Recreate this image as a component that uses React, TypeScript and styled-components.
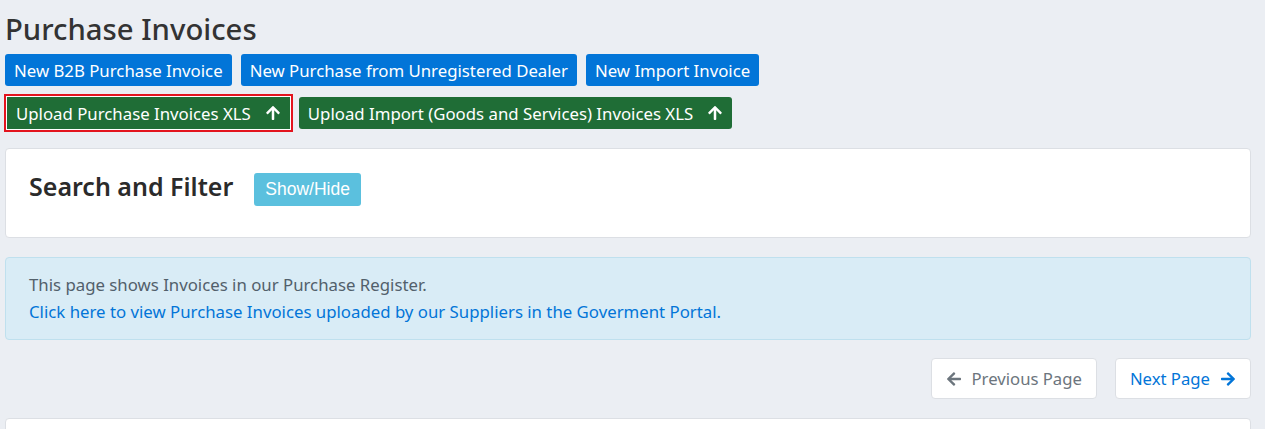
import React from "react";
import styled, { createGlobalStyle } from "styled-components";
import { FaArrowUp, FaArrowLeft, FaArrowRight } from "react-icons/fa";

const GlobalStyle = createGlobalStyle`
  html, body {
    margin: 0;
    padding: 0;
    background: #ebeef3;
    font-family: "Noto Sans", "Open Sans", sans-serif;
    color: #2b2b2b;
  }
  * {
    box-sizing: border-box;
  }
`;

const Page = styled.div`
  padding: 0 14px 0 5px;
`;

const Title = styled.h3`
  margin: 0;
  padding-top: 9px;
  font-size: 29.3px;
  font-weight: 500;
  line-height: 41px;
  color: #333;
`;

const ButtonRow = styled.div<{ $top: number }>`
  display: flex;
  align-items: flex-start;
  gap: 9px;
  margin-top: ${(p) => p.$top}px;
`;

const Button = styled.button<{ $variant: "primary" | "success"; $focused?: boolean }>`
  display: inline-flex;
  align-items: center;
  gap: 14px;
  height: 32px;
  padding: 0 9px;
  border: none;
  border-radius: 3px;
  font-family: inherit;
  font-size: 16.8px;
  color: #fff;
  cursor: pointer;
  background: ${(p) => (p.$variant === "primary" ? "#0275d8" : "#1f6d36")};
  ${(p) =>
    p.$focused &&
    `box-shadow: 0 0 0 1px #fff, 0 0 0 3px #e3141e; border-radius: 0; margin-left: 2px;`}

  svg {
    width: 16px;
    height: 16px;
  }
`;

const Card = styled.div`
  background: #fff;
  border: 1px solid #dcdfe4;
  border-radius: 4px;
`;

const FilterCard = styled(Card)`
  margin-top: 19px;
  padding: 23px 23px 31px;
  display: flex;
  align-items: center;
  gap: 21px;
`;

const CardTitle = styled.h4`
  margin: 0;
  font-size: 25px;
  font-weight: 600;
  color: #2b2b2b;
  position: relative;
  top: -3px;
`;

const InfoButton = styled.button`
  height: 33px;
  padding: 0 11px;
  border: none;
  border-radius: 3px;
  background: #5bc0de;
  color: #fff;
  font-family: "Liberation Sans", Arial, sans-serif;
  font-size: 17.5px;
  cursor: pointer;
`;

const Alert = styled.div`
  margin-top: 19px;
  padding: 13px 23px 14px 23px;
  background: #d9ecf6;
  border: 1px solid #bfe0ee;
  border-radius: 4px;
  font-size: 16.8px;
  line-height: 27px;
  color: #52606b;
`;

const Link = styled.a`
  color: #0275d8;
  text-decoration: none;
  display: block;
`;

const Pager = styled.div`
  display: flex;
  justify-content: flex-end;
  gap: 18px;
  margin-top: 18px;
`;

const PageButton = styled.button<{ $active?: boolean }>`
  display: inline-flex;
  align-items: center;
  gap: 10px;
  height: 41px;
  padding: 0 14px;
  background: #fff;
  border: 1px solid #dcdfe4;
  border-radius: 4px;
  font-family: inherit;
  font-size: 16.7px;
  color: ${(p) => (p.$active ? "#0275d8" : "#6c757d")};
  cursor: pointer;

  svg {
    width: 16px;
    height: 16px;
  }
`;

const TableCard = styled(Card)`
  margin-top: 19px;
  height: 40px;
`;

const App = () => {
  return (
    <Page>
      <GlobalStyle />
      <Title>Purchase Invoices</Title>
      <ButtonRow $top={4}>
        <Button $variant="primary">New B2B Purchase Invoice</Button>
        <Button $variant="primary">New Purchase from Unregistered Dealer</Button>
        <Button $variant="primary">New Import Invoice</Button>
      </ButtonRow>
      <ButtonRow $top={11}>
        <Button $variant="success" $focused>
          Upload Purchase Invoices XLS <FaArrowUp />
        </Button>
        <Button $variant="success">
          Upload Import (Goods and Services) Invoices XLS <FaArrowUp />
        </Button>
      </ButtonRow>
      <FilterCard>
        <CardTitle>Search and Filter</CardTitle>
        <InfoButton>Show/Hide</InfoButton>
      </FilterCard>
      <Alert>
        This page shows Invoices in our Purchase Register.
        <Link href="#">
          Click here to view Purchase Invoices uploaded by our Suppliers in the Goverment Portal.
        </Link>
      </Alert>
      <Pager>
        <PageButton>
          <FaArrowLeft /> Previous Page
        </PageButton>
        <PageButton $active>
          Next Page <FaArrowRight />
        </PageButton>
      </Pager>
      <TableCard />
    </Page>
  );
};

export default App;
